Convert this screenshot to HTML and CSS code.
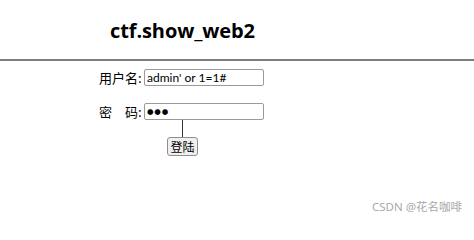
FILE: index.html
```html
<!DOCTYPE html>
<html lang="zh">
<head>
<meta charset="utf-8">
<title>ctf.show_web2</title>
<link rel="stylesheet" href="styles.css">
</head>
<body>
<div class="page">
  <h1 class="title">ctf.show_web2</h1>
  <hr class="rule">
  <form class="form">
    <div class="row">
      <label class="label">用户名:</label><input class="field" type="text" value="admin' or 1=1#">
    </div>
    <div class="row row-pass">
      <label class="label">密　码:</label><input class="field field-pass" type="text" value="●●●">
    </div>
    <div class="row row-btn">
      <button class="btn" type="button">登陆</button>
      <span class="cursor"></span>
    </div>
  </form>
  <div class="watermark">CSDN @花名咖啡</div>
</div>
</body>
</html>
```
FILE: styles.css
```css
html, body {
  margin: 0;
  padding: 0;
  background: #ffffff;
}
.page {
  position: relative;
  width: 474px;
  height: 220px;
  overflow: hidden;
  font-family: "Noto Sans CJK SC", "Noto Sans", sans-serif;
  color: #000;
}
.title {
  margin: 0;
  padding: 16px 0 0 110px;
  height: 44px;
  box-sizing: border-box;
  font-family: "Open Sans", "Noto Sans", sans-serif;
  font-weight: 700;
  font-size: 20px;
  line-height: 30px;
  letter-spacing: -0.1px;
}
.rule {
  margin: 15px 0 0 0;
  border: 0;
  border-top: 2px solid #7d7d7d;
  height: 0;
}
.form {
  margin: 0;
  padding: 8px 0 0 99px;
  position: relative;
}
.row {
  display: flex;
  align-items: center;
  height: 17px;
}
.row-pass {
  margin-top: 17px;
}
.row-btn {
  margin-top: 17px;
  padding-left: 68px;
  height: 19px;
  position: relative;
}
.label {
  font-size: 13px;
  line-height: 17px;
  width: 45px;
  white-space: nowrap;
}
.field {
  box-sizing: border-box;
  width: 120px;
  height: 17px;
  margin: 0;
  padding: 0 2px;
  border: 1px solid #9a9a9a;
  border-radius: 2px;
  font-family: Lato, "Noto Sans", sans-serif;
  font-size: 12px;
  line-height: 15px;
  color: #000;
  background: #fff;
  outline: none;
}
.field-pass {
  font-family: "DejaVu Sans", sans-serif;
  font-size: 7.5px;
  letter-spacing: 0.8px;
}
.btn {
  box-sizing: border-box;
  width: 31px;
  height: 19px;
  margin: 0;
  padding: 0;
  border: 1px solid #8f8f8f;
  border-radius: 3px;
  background: #efefef;
  font-family: "Noto Sans CJK SC", sans-serif;
  font-size: 12px;
  line-height: 17px;
  color: #000;
}
.cursor {
  position: absolute;
  left: 83px;
  top: -17px;
  width: 1px;
  height: 17px;
  background: #333;
}
.watermark {
  position: absolute;
  right: 12px;
  bottom: 6px;
  font-family: "Noto Sans", "Noto Sans CJK SC", sans-serif;
  font-size: 11.5px;
  color: #a8a8a8;
}
```
